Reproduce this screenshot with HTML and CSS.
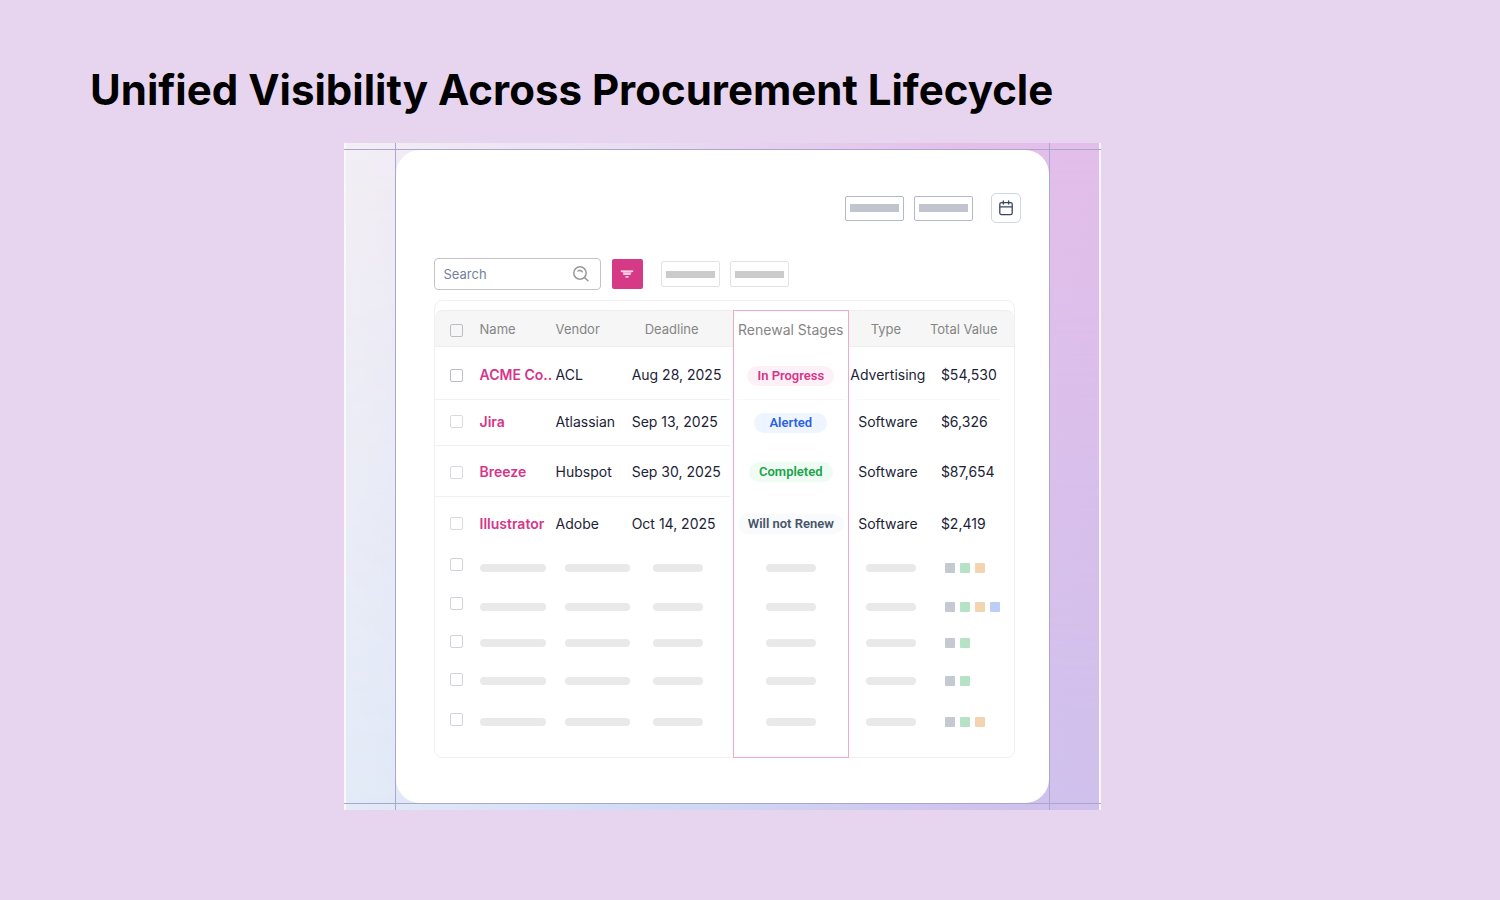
FILE: index.html
```html
<!DOCTYPE html>
<html lang="en">
<head>
<meta charset="utf-8">
<title>Unified Visibility Across Procurement Lifecycle</title>
<link rel="stylesheet" href="styles.css">
</head>
<body>
<h1 class="title">Unified Visibility Across Procurement Lifecycle</h1>
<main class="frame">
  <section class="card">
    <div class="actions">
      <button class="ghost slate" type="button" aria-label="Action one"><span></span></button>
      <button class="ghost slate" type="button" aria-label="Action two"><span></span></button>
      <button class="calendar" type="button" aria-label="Calendar">
        <svg width="16" height="16" viewBox="0 0 16 16" fill="none" stroke="#3b465c" stroke-width="1.3" stroke-linecap="round"><rect x="1.8" y="2.6" width="12.4" height="12" rx="1.6"/><path d="M2 6.800h12M5.300 1v3M10.700 1v3"/></svg>
      </button>
    </div>
    <div class="toolbar">
      <div class="search">
        <input type="search" placeholder="Search" aria-label="Search">
        <svg width="18" height="18" viewBox="0 0 18 18" fill="none" stroke="#999" stroke-width="1.5" stroke-linecap="round"><circle cx="8" cy="8" r="6.200"/><path d="M12.600 12.600l3.400 3.200M6 6q2.400-1.600 4.300 .8"/></svg>
      </div>
      <button class="filter" type="button" aria-label="Filter">
        <svg width="14" height="10" viewBox="0 0 14 10" fill="none" stroke="#fff" stroke-width="1.300"><path d="M.8 2.200h12.400M3.200 5h7.600M5.400 7.800h3.200"/><path d="M2.500 3.500h9" stroke="#f0a6cb" stroke-width="1"/></svg>
      </button>
      <button class="ghost" type="button" aria-label="Option one"><span></span></button>
      <button class="ghost" type="button" aria-label="Option two"><span></span></button>
    </div>
    <div class="panel">
      <table>
        <colgroup><col class="c-check"><col class="c-name"><col class="c-vendor"><col class="c-date"><col class="c-stage"><col class="c-type"><col class="c-value"></colgroup>
        <thead>
          <tr><th class="check"><input type="checkbox" aria-label="Select all"></th><th>Name</th><th>Vendor</th><th class="date">Deadline</th><th class="stage">Renewal Stages</th><th class="type">Type</th><th class="value">Total Value</th></tr>
        </thead>
        <tbody>
          <tr class="row-1 ruled"><td class="check"><input type="checkbox" aria-label="Select ACME"></td><td><a href="#">ACME Co..</a></td><td>ACL</td><td class="date">Aug 28, 2025</td><td class="stage"><span class="badge pink">In Progress</span></td><td class="type">Advertising</td><td class="value">$54,530</td></tr>
          <tr class="row-2 ruled faint"><td class="check"><input type="checkbox" aria-label="Select Jira"></td><td><a href="#">Jira</a></td><td>Atlassian</td><td class="date">Sep 13, 2025</td><td class="stage"><span class="badge blue">Alerted</span></td><td class="type">Software</td><td class="value">$6,326</td></tr>
          <tr class="row-3 ruled faint"><td class="check"><input type="checkbox" aria-label="Select Breeze"></td><td><a href="#">Breeze</a></td><td>Hubspot</td><td class="date">Sep 30, 2025</td><td class="stage"><span class="badge green">Completed</span></td><td class="type">Software</td><td class="value">$87,654</td></tr>
          <tr class="row-4 faint"><td class="check"><input type="checkbox" aria-label="Select Illustrator"></td><td><a href="#">Illustrator</a></td><td>Adobe</td><td class="date">Oct 14, 2025</td><td class="stage"><span class="badge gray">Will not Renew</span></td><td class="type">Software</td><td class="value">$2,419</td></tr>
          <tr class="blank"><td class="check"><input type="checkbox" aria-label="Select row 5"></td><td><i class="bar long"></i></td><td><i class="bar mid"></i></td><td class="date"><i class="bar"></i></td><td class="stage"><i class="bar"></i></td><td class="type"><i class="bar"></i></td><td class="value"><div class="dots"><i class="slate"></i><i class="green"></i><i class="orange"></i></div></td></tr>
          <tr class="blank"><td class="check"><input type="checkbox" aria-label="Select row 6"></td><td><i class="bar long"></i></td><td><i class="bar mid"></i></td><td class="date"><i class="bar"></i></td><td class="stage"><i class="bar"></i></td><td class="type"><i class="bar"></i></td><td class="value"><div class="dots"><i class="slate"></i><i class="green"></i><i class="orange"></i><i class="blue"></i></div></td></tr>
          <tr class="blank short"><td class="check"><input type="checkbox" aria-label="Select row 7"></td><td><i class="bar long"></i></td><td><i class="bar mid"></i></td><td class="date"><i class="bar"></i></td><td class="stage"><i class="bar"></i></td><td class="type"><i class="bar"></i></td><td class="value"><div class="dots"><i class="slate"></i><i class="green"></i></div></td></tr>
          <tr class="blank tall"><td class="check"><input type="checkbox" aria-label="Select row 8"></td><td><i class="bar long"></i></td><td><i class="bar mid"></i></td><td class="date"><i class="bar"></i></td><td class="stage"><i class="bar"></i></td><td class="type"><i class="bar"></i></td><td class="value"><div class="dots"><i class="slate"></i><i class="green"></i></div></td></tr>
          <tr class="blank last"><td class="check"><input type="checkbox" aria-label="Select row 9"></td><td><i class="bar long"></i></td><td><i class="bar mid"></i></td><td class="date"><i class="bar"></i></td><td class="stage"><i class="bar"></i></td><td class="type"><i class="bar"></i></td><td class="value"><div class="dots"><i class="slate"></i><i class="green"></i><i class="orange"></i></div></td></tr>
        </tbody>
      </table>
    </div>
  </section>
</main>
</body>
</html>
```
FILE: styles.css
```css
* { box-sizing: border-box; }

body {
  margin: 0;
  padding: 63px 0 90px;
  min-height: 100vh;
  background: #e7d5f0;
  font-family: Inter, "Liberation Sans", sans-serif;
  color: #1c2336;
}

.title {
  margin: 0 6%;
  font-size: 42px;
  line-height: 54px;
  font-weight: 700;
  color: #000;
}

/* Gradient backdrop with guide lines around the card */
.frame {
  position: relative;
  z-index: 0;
  width: 50.5%;
  min-width: 757px;
  margin: 26px 0 0 22.9%;
  padding: 7px 52px;
  background: linear-gradient(90deg, #f3eff5, #e9def2 38%, #e4c0eb 80%, #e3beea);
}

.frame::before,
.frame::after {
  content: "";
  position: absolute;
  inset: 0;
  z-index: -1;
}

.frame::before {
  background: linear-gradient(90deg, #e3ebf7, #cfd9f5 45%, #cfc2ed 85%, #cfc0ec);
  -webkit-mask-image: linear-gradient(transparent, #000);
  mask-image: linear-gradient(transparent, #000);
}

.frame::after {
  --line: linear-gradient(#aaa7cb, #aaa7cb);
  --edge: linear-gradient(#fbf8fd, #fbf8fd);
  background:
    var(--line) 0 6px / 100% 1px no-repeat,
    var(--line) 0 calc(100% - 6px) / 100% 1px no-repeat,
    var(--line) 51px 0 / 1px 100% no-repeat,
    var(--line) calc(100% - 51px) 0 / 1px 100% no-repeat,
    var(--edge) 0 0 / 2px 100% no-repeat,
    var(--edge) 100% 0 / 2px 100% no-repeat;
}

.card {
  padding: 43px 34px 45px 38px;
  border-radius: 24px;
  background: #fff;
}

.actions {
  display: flex;
  justify-content: flex-end;
  align-items: center;
  gap: 10px;
  margin-right: -6px;
}

button {
  display: flex;
  align-items: center;
  justify-content: center;
  padding: 0;
  border: 0;
  background: #fff;
}

.ghost {
  width: 59px;
  height: 26px;
  border: 1px solid #e3e3e3;
  border-radius: 2px;
}

.ghost span {
  width: 49px;
  height: 7px;
  background: #cbcbcb;
}

.ghost.slate { height: 25px; border-color: #b3b9ca; }
.ghost.slate span { height: 8px; background: #c0c4cf; }

.calendar {
  width: 30px;
  height: 30px;
  margin-left: 8px;
  border: 1px solid #ccd6e4;
  border-radius: 5px;
}

.toolbar {
  display: flex;
  align-items: center;
  gap: 10px;
  margin: 35px 0 10px;
}

.search {
  display: flex;
  align-items: center;
  width: 167px;
  height: 32px;
  padding: 0 10px 0 9px;
  border: 1px solid #c4c4c4;
  border-radius: 4px;
}

.search input {
  flex: 1;
  min-width: 0;
  padding: 0;
  border: 0;
  outline: 0;
  background: none;
  font: 13px/20px Inter, "Liberation Sans", sans-serif;
}

.search input::placeholder { color: #75829c; }

.filter {
  width: 31px;
  height: 30px;
  margin: 0 8px 0 1px;
  border-radius: 2px;
  background: #d63a87;
}

.panel {
  padding-top: 9px;
  border: 1px solid #f0f0f0;
  border-radius: 8px;
}

table {
  width: 100%;
  table-layout: fixed;
  border-collapse: separate;
  border-spacing: 0;
  margin-bottom: -1px;
}

.c-check { width: 45px; }
.c-name { width: 76px; }
.c-vendor { width: 76px; }
.c-date { width: 101px; }
.c-stage { width: 116px; }
.c-type { width: 78px; }
.c-value { width: 87px; }

th, td {
  padding: 0;
  text-align: left;
  white-space: nowrap;
  font-size: 14px;
  line-height: 20px;
}

th {
  height: 37px;
  border: solid #eee;
  border-width: 1px 0;
  background: #f6f6f6;
  font-size: 13px;
  font-weight: 400;
  color: #858585;
}

th:first-child { border-radius: 8px 0 0 0; }
th:last-child { border-radius: 0 8px 0 0; }

.check { padding-left: 15px; }

.check input {
  appearance: none;
  display: block;
  width: 13px;
  height: 13px;
  margin: 0;
  border: 1px solid #bcbcc6;
  border-radius: 2px;
  background: #fff;
}

th.check { padding-top: 3px; }
th.check input { background: none; }
td.check { padding-top: 2px; }
.faint .check input { border-color: #dadade; }
.blank .check input { border-color: #d2d2da; }

.stage, .type { text-align: center; }

td.stage,
th.stage {
  border: solid #f2a9cb;
  border-width: 0 1px;
}

th.stage {
  padding-top: 2px;
  border-top-width: 1px;
  background: #fff;
  font-size: 14px;
}

th.type { padding-right: 4px; }
th.date { padding-left: 13px; }
th.value { padding-left: 3px; }
td.value { padding-left: 14px; }

td a {
  color: #d5358a;
  font-weight: 600;
  text-decoration: none;
}

.row-1 td { height: 53px; padding-top: 3px; }
.row-2 td { height: 46px; padding-bottom: 2px; }
.row-3 td { height: 51px; }
.row-4 td { height: 51px; padding-top: 2px; }
.row-1 .check { padding-top: 4px; }
.row-2 .check { padding: 0 0 3px 15px; }

.ruled td {
  background: linear-gradient(#f1f1f3, #f1f1f3) 0 100% / 100% 1px no-repeat;
}
.ruled .date { background-size: calc(100% - 3px) 1px; }
.ruled .stage, .ruled .type, .ruled .value { background: none; }
.row-1 .stage { background: linear-gradient(#f7f7f7, #f7f7f7) 50% 100% / calc(100% - 6px) 1px no-repeat; }
.row-1 .type { background: linear-gradient(#f7f7f7, #f7f7f7) 100% 100% / calc(100% - 8px) 1px no-repeat; }
.row-1 .value { background: linear-gradient(#f7f7f7, #f7f7f7) 0 100% / calc(100% - 14px) 1px no-repeat; }

.badge {
  display: inline-block;
  padding: 0 10px;
  border-radius: 10px;
  font-family: Roboto, "Liberation Sans", sans-serif;
  font-size: 13px;
  line-height: 20px;
  font-weight: 600;
}

.badge.pink { background: #fdf1f7; color: #d5358a; }
.badge.blue { padding: 0 15px; background: #eef5ff; color: #2a62e4; }
.badge.green { background: #effcf3; color: #1ba34a; }
.badge.gray { background: #f8fafc; color: #465468; }

.blank td { height: 39px; }
.blank.short td { height: 33px; }
.blank.tall td { height: 43px; }
.blank.last td { height: 56px; padding-bottom: 16px; }
.blank td.check { padding-top: 0; padding-bottom: 6px; }
.blank.short td.check,
.blank.tall td.check { padding-bottom: 3px; }
.blank.last td.check { padding-bottom: 21px; }
.blank.last td.stage { border-bottom-width: 1px; }

.bar {
  display: block;
  width: 50px;
  height: 8px;
  border-radius: 4px;
  background: #e9e9e9;
}

.bar.long { width: 66px; }
.bar.mid { width: 65px; margin-left: 9px; }
.date .bar { margin-left: 21px; }
.stage .bar { margin: 0 auto; }
.type .bar { margin-left: 17px; }

.blank .value { padding-left: 18px; }

.dots {
  display: flex;
  gap: 5px;
}

.dots i {
  width: 10px;
  height: 10px;
  border-radius: 1px;
}

.dots .slate { background: #c5c9d1; }
.dots .green { background: #b6e2c6; }
.dots .orange { background: #f3d3b0; }
.dots .blue { background: #bccdf8; }
```
